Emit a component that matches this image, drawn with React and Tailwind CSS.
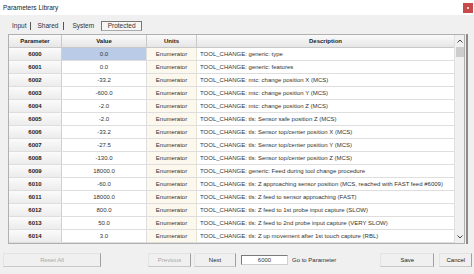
import React from "react";

const rows = [
  ["6000", "0.0", "TOOL_CHANGE: generic: type"],
  ["6001", "0.0", "TOOL_CHANGE: generic: features"],
  ["6002", "-33.2", "TOOL_CHANGE: mtc: change position X (MCS)"],
  ["6003", "-600.0", "TOOL_CHANGE: mtc: change position Y (MCS)"],
  ["6004", "-2.0", "TOOL_CHANGE: mtc: change position Z (MCS)"],
  ["6005", "-2.0", "TOOL_CHANGE: tls: Sensor safe position Z (MCS)"],
  ["6006", "-33.2", "TOOL_CHANGE: tls: Sensor top/center position X (MCS)"],
  ["6007", "-27.5", "TOOL_CHANGE: tls: Sensor top/center position Y (MCS)"],
  ["6008", "-130.0", "TOOL_CHANGE: tls: Sensor top/center position Z (MCS)"],
  ["6009", "18000.0", "TOOL_CHANGE: generic: Feed during tool change procedure"],
  ["6010", "-60.0", "TOOL_CHANGE: tls: Z approaching sensor position (MCS, reached with FAST feed #6009)"],
  ["6011", "18000.0", "TOOL_CHANGE: tls: Z feed to sensor approaching (FAST)"],
  ["6012", "800.0", "TOOL_CHANGE: tls: Z feed to 1st probe input capture (SLOW)"],
  ["6013", "50.0", "TOOL_CHANGE: tls: Z feed to 2nd probe input capture (VERY SLOW)"],
  ["6014", "3.0", "TOOL_CHANGE: tls: Z up movement after 1st touch capture (RBL)"],
];

function Btn({ children, className = "", disabled = false }) {
  return (
    <div
      className={
        "flex items-center justify-center h-[14px] bg-[#f0f0f0] border border-[#e3e3e3] border-r-[#a0a0a0] border-b-[#c8c8c8] " +
        (disabled ? "text-[#a8a8a8] " : "text-[#222] ") +
        className
      }
    >
      {children}
    </div>
  );
}

export default function App() {
  return (
    <div
      className="w-[474px] h-[274px] bg-[#f0f0f0] flex flex-col text-[6px] text-[#333] overflow-hidden"
      style={{ fontFamily: '"Liberation Sans", Arial, sans-serif' }}
    >
      {/* title bar */}
      <div className="h-[15px] bg-white flex items-center justify-between pl-[3px] pr-[1px] shrink-0">
        <span className="text-[6.5px] text-[#222]">Parameters Library</span>
        <div className="w-[10px] h-[10px] bg-[#c94a4a] flex items-center justify-center">
          <div className="w-[2px] h-[2px] bg-white/80" />
        </div>
      </div>

      {/* tabs */}
      <div className="h-[14px] mt-[4px] flex items-center pl-[12px] shrink-0 text-[6.5px]">
        <span>Input</span>
        <span className="ml-[4px] w-px h-[8px] bg-[#555]" />
        <span className="ml-[6px]">Shared</span>
        <span className="ml-[5px] w-px h-[8px] bg-[#555]" />
        <span className="ml-[8px]">System</span>
        <span className="ml-[7px] border border-[#777] border-b-[#aaa] bg-[#f6f6f6] w-[41px] h-[10px] flex items-center justify-center">
          Protected
        </span>
      </div>

      {/* table panel */}
      <div className="ml-[8px] mt-[1px] w-[460px] h-[210px] flex shrink-0 border-r-2 border-r-[#8a8a8a]">
        <div className="w-[457px] border border-[#b0b0b0] bg-white flex shrink-0">
          <div className="w-[445px] flex flex-col">
            <div className="h-[13px] flex bg-gradient-to-b from-[#fafafa] to-[#e6e6e6] border-b border-[#c8c8c8] font-bold text-[#222] shrink-0">
              <div className="w-[53px] border-r border-[#c8c8c8] flex items-center justify-center">Parameter</div>
              <div className="w-[85px] border-r border-[#c8c8c8] flex items-center justify-center">Value</div>
              <div className="w-[50px] border-r border-[#c8c8c8] flex items-center justify-center">Units</div>
              <div className="flex-1 flex items-center justify-center">Description</div>
            </div>
            {rows.map(([p, v, d], i) => (
              <div key={p} className="h-[13px] flex border-b border-[#dedede] shrink-0">
                <div className="w-[53px] border-r border-[#cfcfcf] bg-gradient-to-b from-[#fbfbfb] to-[#ececec] flex items-center justify-center font-bold text-[#222]">
                  {p}
                </div>
                <div
                  className={
                    "w-[85px] border-r border-[#dedede] flex items-center justify-center " +
                    (i === 0 ? "bg-[#b9cbe6]" : "bg-white")
                  }
                >
                  {v}
                </div>
                <div className="w-[50px] border-r border-[#e8e2d2] bg-[#fcf8ee] flex items-center justify-center">
                  Enumerator
                </div>
                <div className="flex-1 flex items-center pl-[3px] whitespace-nowrap overflow-hidden">{d}</div>
              </div>
            ))}
          </div>
          {/* scrollbar */}
          <div className="flex-1 bg-[#f0f0f0] border-l border-[#e0e0e0] flex flex-col items-center">
            <div className="h-[12px] flex items-center justify-center text-[#555]">
              <svg width="6" height="4" viewBox="0 0 6 4">
                <path d="M0.5 3.5 L3 1 L5.5 3.5" stroke="#444" strokeWidth="1" fill="none" />
              </svg>
            </div>
            <div className="w-[8px] h-[10px] bg-[#cdcdcd]" />
            <div className="flex-1" />
            <div className="h-[12px] flex items-center justify-center">
              <svg width="6" height="4" viewBox="0 0 6 4">
                <path d="M0.5 0.5 L3 3 L5.5 0.5" stroke="#444" strokeWidth="1" fill="none" />
              </svg>
            </div>
          </div>
        </div>
      </div>

      {/* bottom bar */}
      <div className="flex items-center mt-[9px] pl-[3px] shrink-0">
        <Btn className="w-[98px]" disabled>Reset All</Btn>
        <Btn className="w-[43px] ml-[47px]" disabled>Previous</Btn>
        <Btn className="w-[42px] ml-[3px]">Next</Btn>
        <div className="ml-[5px] w-[47px] h-[10px] bg-white border border-[#7a7a7a] border-r-[#d0d0d0] border-b-[#d0d0d0] flex items-center justify-center">
          6000
        </div>
        <span className="ml-[4px]">Go to Parameter</span>
        <Btn className="w-[54px] ml-[44px]">Save</Btn>
        <Btn className="w-[33px] ml-[5px]">Cancel</Btn>
      </div>
    </div>
  );
}
